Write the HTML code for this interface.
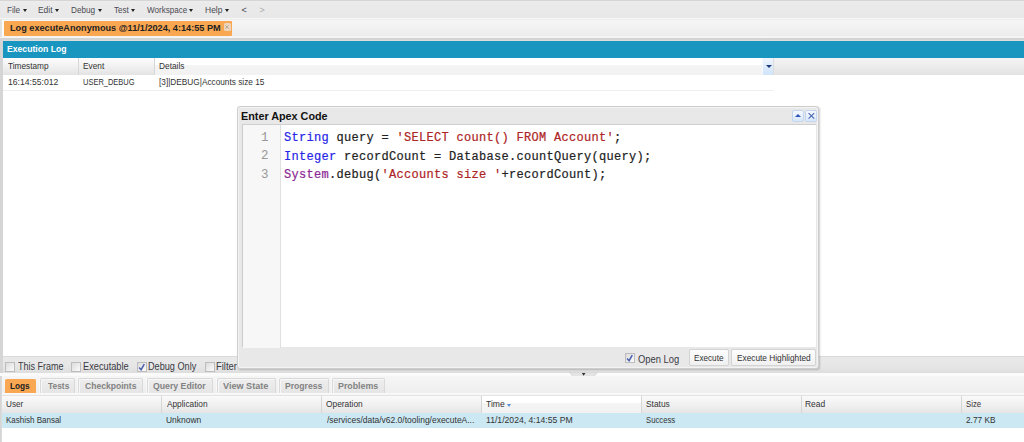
<!DOCTYPE html>
<html><head><meta charset="utf-8">
<style>
*{box-sizing:border-box;margin:0;padding:0}
html,body{width:1024px;height:442px;overflow:hidden;background:#fff;font-family:"Liberation Sans",sans-serif;font-size:9px;color:#333}
.a{position:absolute;white-space:nowrap}
.t{position:absolute;white-space:nowrap;transform-origin:0 0;font-size:9px;color:#333;line-height:normal}
.b{font-weight:bold}
#menubar{left:0;top:0;width:1024px;height:19px;background:linear-gradient(#d6d6d6,#d6d6d6 1px,#ececec 1px,#eaeaea 30%,#e8e8e8);border-bottom:1px solid #f6f6f6}
.m{color:#4a4a52}
.caret{position:absolute;top:8.8px;width:0;height:0;border-left:2.2px solid transparent;border-right:2.2px solid transparent;border-top:3px solid #222}
#tabbar{left:0;top:19px;width:1024px;height:17px;background:linear-gradient(#e6e6e6,#f5f5f5 1px,#f3f3f3 40%,#ececec)}
#tabline{left:0;top:36px;width:1024px;height:2px;background:#f4f4f4}
#tab1{left:4px;top:21px;width:228px;height:15px;background:#faa752;border-radius:1px}
#tab1 .x{position:absolute;left:219.5px;top:2px;width:7px;height:7.5px;background:#edd6bd;border-radius:1.5px}
#graybar{left:0;top:38px;width:1024px;height:3px;background:linear-gradient(#d4d4d4,#d4d4d4 70%,#e6e6e6)}
#leftb{left:0;top:39px;width:3px;height:334px;background:#d5d5d5}
#leftt{left:0;top:19px;width:2px;height:18px;background:#e2e2e2}
#leftw{left:2px;top:20px;width:2px;height:17px;background:#fbfbfb}
#blue{left:3px;top:41px;width:1021px;height:17px;background:#1996c0}
#ghdr{left:3px;top:58px;width:770px;height:17px;background:linear-gradient(#fcfcfc,#f1f1f1 50%,#e3e3e3)}
#ghdr2{left:773px;top:58px;width:251px;height:17px;background:linear-gradient(#f4f4f4,#e3e3e3);border-left:1px solid #dcdcdc}
.hc{position:absolute;top:0;height:17px;border-right:1px solid #d6d6d6}
#row1{left:3px;top:75px;width:770px;height:16px;border-bottom:1px solid #eeeeee;background:#fff}
#ddbtn{left:762px;top:58px;width:11px;height:17px;background:linear-gradient(#f0f6fe,#cfe3fa);border-left:1px solid #f6f9fd}
#ddbtn i{position:absolute;left:2.5px;top:7px;border-left:3px solid transparent;border-right:3px solid transparent;border-top:3px solid #1f3b80}
#cbbar{left:3px;top:356px;width:1021px;height:17px;background:linear-gradient(#e9e9e9,#e6e6e6 60%,#dedede);border-top:1px solid #d9d9d9}
.cb{position:absolute;width:10px;height:10px;border:1px solid #bdbdbd;background:linear-gradient(135deg,#dcdcdc,#fbfbfb)}
.cbl{font-size:10px;color:#3a3a44}
.chk{position:absolute;left:2px;top:0px;width:4px;height:7px;border-right:1.2px solid #2a3f9a;border-bottom:1.2px solid #2a3f9a;transform:rotate(35deg) skewX(-10deg)}
#split{left:0;top:373px;width:1024px;height:3px;background:#fbfbfb}
#btabbar{left:0;top:376px;width:1024px;height:17px;background:linear-gradient(#f6f6f6,#eeeeee)}
#btabline{left:0;top:393px;width:1024px;height:3px;background:linear-gradient(#fcfcfc,#f4f4f4 60%,#d9d9d9)}
.bt{position:absolute;top:378px;height:15px;background:linear-gradient(#eeeeee,#e5e5e5);border:1px solid #d9d9d9;border-bottom:none;border-radius:2px 2px 0 0;box-shadow:inset 1px 1px 0 #f7f7f7,-1px 0 0 #f8f8f8}
.btl{font-weight:bold;color:#828282}
#bgh{left:2px;top:396px;width:1022px;height:17px;background:linear-gradient(#fafafa,#f1f1f1 50%,#e5e5e5)}
#brow{left:2px;top:413px;width:1022px;height:15px;background:#cbe8f3}
#lefb2{left:0;top:376px;width:2px;height:66px;background:linear-gradient(90deg,#d2d2d2,#dedede)}
#modal{left:237px;top:106px;width:582px;height:262.5px;background:#e8e8e8;border:1px solid #cdcdcd;border-radius:3px;box-shadow:inset 0 0 0 1px #f3f3f3,1px 1px 2px rgba(0,0,0,.2)}
#editor{position:absolute;left:4px;top:17px;width:574px;height:223px;background:#fff;border-top:1px solid #cfcfcf;border-left:1px solid #cbcbcb}
#gutter{position:absolute;left:0;top:0;width:38px;height:223px;background:#f7f7f7;border-right:1px solid #e0e0e0}
.ln{position:absolute;right:11.5px;font-family:"Liberation Mono",monospace;font-size:12.5px;color:#999}
.code{position:absolute;left:41px;font-family:"Liberation Mono",monospace;font-size:12px;letter-spacing:0.3px;-webkit-text-stroke:0.2px;color:#222;white-space:pre}
.kw{color:#2626e6}.st{color:#ad2424}.sy{color:#8a2794}
.mbtn{position:absolute;top:3px;width:12px;height:12px;background:linear-gradient(#f5f9fe,#d7e7fa);border:1px solid #c3d6f0;border-radius:2px}
.pbtn{position:absolute;top:241.5px;height:17px;background:linear-gradient(#fdfdfd,#f0f0f0);border:1px solid #d3d3d3;border-radius:2px}
</style></head><body>

<div id="menubar" class="a">
  <i class="caret" style="left:23px"></i>
  <i class="caret" style="left:54.8px"></i>
  <i class="caret" style="left:97.5px"></i>
  <i class="caret" style="left:131.3px"></i>
  <i class="caret" style="left:189.4px"></i>
  <i class="caret" style="left:224.8px"></i>
</div>
<span class="t m" style="left:7.12px;top:5px;transform:scaleX(0.9037)">File</span>
<span class="t m" style="left:38.20px;top:5px;transform:scaleX(0.9356)">Edit</span>
<span class="t m" style="left:71.12px;top:5px;transform:scaleX(0.9109)">Debug</span>
<span class="t m" style="left:113.78px;top:5px;transform:scaleX(0.8923)">Test</span>
<span class="t m" style="left:147.00px;top:5px;transform:scaleX(0.8989)">Workspace</span>
<span class="t m" style="left:204.79px;top:5px;transform:scaleX(0.9429)">Help</span>
<span class="t m" style="left:241.5px;top:5px">&lt;</span>
<span class="t m" style="left:259.5px;top:5px;color:#aaa">&gt;</span>

<div id="tabbar" class="a"></div>
<div id="tabline" class="a"></div>
<div id="tab1" class="a"><i class="x"><svg style="position:absolute;left:1.5px;top:1.7px" width="4" height="4" viewBox="0 0 4 4"><path d="M0.3 0.3L3.7 3.7M3.7 0.3L0.3 3.7" stroke="#b8a896" stroke-width="1"/></svg></i></div>
<span class="t b" style="left:9.89px;top:23px;color:#222;transform:scaleX(1.0158)">Log executeAnonymous @11/1/2024, 4:14:55 PM</span>
<div id="graybar" class="a"></div>
<div id="leftb" class="a"></div><div id="leftt" class="a"></div><div id="leftw" class="a"></div>
<div id="blue" class="a"></div>
<span class="t b" style="left:6.52px;top:44px;color:#fff;transform:scaleX(0.9590)">Execution Log</span>
<div id="ghdr" class="a">
  <div class="hc" style="left:0;width:76px"></div>
  <div class="hc" style="left:76px;width:76px"></div>
  <div class="hc" style="left:152px;width:607px;border-right:none;background:linear-gradient(#fff 0,#fff 40%,#f4f4f4 40%,#f2f2f2)"></div>
</div>
<div id="ddbtn" class="a"><i></i></div>
<div id="ghdr2" class="a"></div>
<span class="t" style="left:7.77px;top:61px;transform:scaleX(0.9195)">Timestamp</span>
<span class="t" style="left:82.81px;top:61px;transform:scaleX(0.9213)">Event</span>
<span class="t" style="left:158.81px;top:61px;transform:scaleX(0.9245)">Details</span>
<div id="row1" class="a"></div>
<span class="t" style="left:7.52px;top:77px;transform:scaleX(0.9565)">16:14:55:012</span>
<span class="t" style="left:82.88px;top:77px;transform:scaleX(0.8313)">USER_DEBUG</span>
<span class="t" style="left:159.04px;top:77px;transform:scaleX(0.9187)">[3]|DEBUG|Accounts size 15</span>

<div id="cbbar" class="a">
  <i class="cb" style="left:2px;top:5px"></i>
  <i class="cb" style="left:67.5px;top:5px"></i>
  <i class="cb" style="left:133.5px;top:5px"><svg style="position:absolute;left:0;top:0" width="8" height="8" viewBox="0 0 8 8"><path d="M1.1 4.4L3.1 6.7L6.3 1.2" stroke="#4a5fae" stroke-width="1.5" fill="none"/></svg></i>
  <i class="cb" style="left:201.5px;top:5px"></i>
</div>
<span class="t cbl" style="left:17.77px;top:360.5px;transform:scaleX(0.9000)">This Frame</span>
<span class="t cbl" style="left:82.81px;top:360.5px;transform:scaleX(0.9223)">Executable</span>
<span class="t cbl" style="left:148.31px;top:360.5px;transform:scaleX(0.9135)">Debug Only</span>
<span class="t cbl" style="left:216.29px;top:360.5px;transform:scaleX(0.9412)">Filter</span>
<div id="split" class="a"></div>
<svg class="a" style="left:569px;top:372px" width="29" height="5" viewBox="0 0 29 5"><path d="M0.5 0.3L28.5 0.3L25 4.7L4 4.7Z" fill="#e4e4e4" stroke="#cfcfcf" stroke-width="0.6"/><path d="M12.8 1L16.5 1L14.65 3.8Z" fill="#333"/></svg>
<div id="btabbar" class="a"></div>
<div class="bt" style="left:4.5px;top:379px;height:14px;width:31.5px;background:#f9a752;border-color:#f9a752;box-shadow:none"></div>
<div class="bt" style="left:40px;width:35px"></div>
<div class="bt" style="left:78px;width:65px"></div>
<div class="bt" style="left:146.5px;width:66.5px"></div>
<div class="bt" style="left:216.5px;width:59px"></div>
<div class="bt" style="left:278.5px;width:50px"></div>
<div class="bt" style="left:331.5px;width:53.5px"></div>
<span class="t btl" style="left:10.04px;top:381px;color:#222;transform:scaleX(0.9157)">Logs</span>
<span class="t btl" style="left:47.50px;top:381px;transform:scaleX(0.9333)">Tests</span>
<span class="t btl" style="left:85.26px;top:381px;transform:scaleX(0.9533)">Checkpoints</span>
<span class="t btl" style="left:153.26px;top:381px;transform:scaleX(0.9677)">Query Editor</span>
<span class="t btl" style="left:223.00px;top:381px;transform:scaleX(1.0112)">View State</span>
<span class="t btl" style="left:285.02px;top:381px;transform:scaleX(0.9542)">Progress</span>
<span class="t btl" style="left:338.01px;top:381px;transform:scaleX(0.9814)">Problems</span>
<div id="btabline" class="a"></div>
<div id="lefb2" class="a"></div>
<div id="bgh" class="a">
  <div class="hc" style="left:0;width:160px"></div>
  <div class="hc" style="left:160px;width:160px"></div>
  <div class="hc" style="left:320px;width:160px"></div>
  <div class="hc" style="left:480px;width:160px;background:linear-gradient(#fff 0,#fff 40%,#f4f4f4 40%,#f2f2f2)"><i style="position:absolute;left:25px;top:8px;border-left:2.5px solid transparent;border-right:2.5px solid transparent;border-top:3px solid #5b8fd6"></i></div>
  <div class="hc" style="left:640px;width:160px"></div>
  <div class="hc" style="left:800px;width:160px"></div>
  <div class="hc" style="left:960px;width:62px;border-right:none"></div>
</div>
<span class="t" style="left:5.82px;top:399px;transform:scaleX(0.9041)">User</span>
<span class="t" style="left:166.50px;top:399px;transform:scaleX(0.9195)">Application</span>
<span class="t" style="left:326.27px;top:399px;transform:scaleX(0.9290)">Operation</span>
<span class="t" style="left:486.26px;top:399px;transform:scaleX(0.9474)">Time</span>
<span class="t" style="left:646.04px;top:399px;transform:scaleX(0.9293)">Status</span>
<span class="t" style="left:805.30px;top:399px;transform:scaleX(0.9383)">Read</span>
<span class="t" style="left:966.07px;top:399px;transform:scaleX(0.8657)">Size</span>
<div id="brow" class="a"></div>
<span class="t" style="left:5.83px;top:415px;transform:scaleX(0.8889)">Kashish Bansal</span>
<span class="t" style="left:165.80px;top:415px;transform:scaleX(0.9379)">Unknown</span>
<span class="t" style="left:326.50px;top:415px;transform:scaleX(0.9406)">/services/data/v62.0/tooling/executeA...</span>
<span class="t" style="left:486.02px;top:415px;transform:scaleX(0.9580)">11/1/2024, 4:14:55 PM</span>
<span class="t" style="left:646.07px;top:415px;transform:scaleX(0.8571)">Success</span>
<span class="t" style="left:966.04px;top:415px;transform:scaleX(0.9194)">2.77 KB</span>

<div id="modal" class="a">
  <div class="mbtn" style="left:554px"><i style="position:absolute;left:2px;top:2.5px;border-left:3.5px solid transparent;border-right:3.5px solid transparent;border-bottom:3.5px solid #2f55b8"></i></div>
  <div class="mbtn" style="left:567px"><svg style="position:absolute;left:1px;top:1px" width="9" height="9" viewBox="0 0 9 9"><path d="M1.6 1.2L7.2 6.7M7.2 1.2L1.6 6.7" stroke="#4a64b0" stroke-width="1.1"/></svg></div>
  <div id="editor">
    <div id="gutter">
      <div class="ln" style="top:5.5px">1</div>
      <div class="ln" style="top:24px">2</div>
      <div class="ln" style="top:42.5px">3</div>
    </div>
    <div class="code" style="top:6px"><span class="kw">String</span> query = <span class="st">'SELECT count() FROM Account'</span>;</div>
    <div class="code" style="top:24.5px"><span class="kw">Integer</span> recordCount = Database.countQuery(query);</div>
    <div class="code" style="top:43px"><span class="sy">System</span>.debug(<span class="st">'Accounts size '</span>+recordCount);</div>
  </div>
  <i class="cb" style="left:387px;top:246px"><svg style="position:absolute;left:0;top:0" width="8" height="8" viewBox="0 0 8 8"><path d="M1.1 4.4L3.1 6.7L6.3 1.2" stroke="#4a5fae" stroke-width="1.5" fill="none"/></svg></i>
  <div class="pbtn" style="left:450.5px;width:40px"></div>
  <div class="pbtn" style="left:492.5px;width:85px"></div>
</div>
<span class="t b" style="left:241.22px;top:111px;font-size:10.4px;color:#111;transform:scaleX(1.0393)">Enter Apex Code</span>
<span class="t cbl" style="left:637.53px;top:353.5px;transform:scaleX(0.9357)">Open Log</span>
<span class="t" style="left:694.32px;top:353px;transform:scaleX(0.9048)">Execute</span>
<span class="t" style="left:736.81px;top:353px;transform:scaleX(0.9206)">Execute Highlighted</span>
</body></html>
